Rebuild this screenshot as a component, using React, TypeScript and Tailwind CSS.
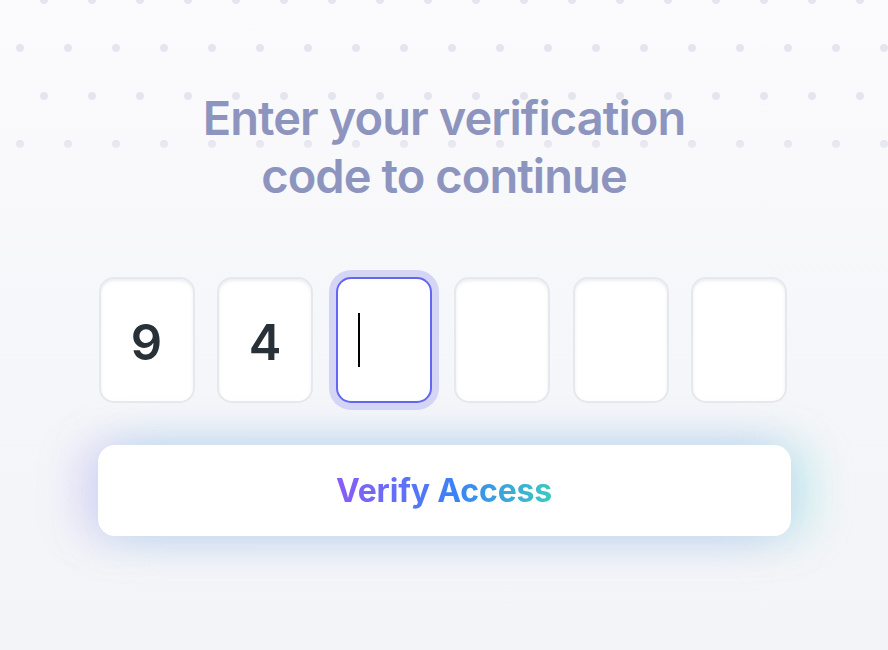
import React from "react";

export default function App() {
  const digits = ["9", "4", "", "", "", ""];
  return (
    <div className="relative h-[650px] w-full overflow-hidden bg-[linear-gradient(180deg,#fbfbfd_0%,#f5f6f9_60%,#f3f4f7_100%)] font-['Inter',sans-serif]">
      <div className="pointer-events-none absolute inset-x-0 top-0 h-[175px] bg-[radial-gradient(circle,#e4e5ee_3.6px,transparent_4.4px),radial-gradient(circle,#e4e5ee_3.6px,transparent_4.4px)] bg-[length:48px_96px] bg-[position:20px_-48px,-4px_0px] [mask-image:linear-gradient(180deg,#000_0%,#000_80%,transparent_100%)]" />
      <div className="relative flex flex-col items-center pt-[89px]">
        <h1 className="text-center text-[47px] font-semibold leading-[58px] tracking-[-0.02em] text-[#8d95bf]">
          Enter your verification
          <br />
          code to continue
        </h1>
        <div className="ml-[-2px] mt-[72px] flex gap-[22.6px]">
          {digits.map((d, i) =>
            i === 2 ? (
              <div
                key={i}
                className="flex h-[126px] w-[96px] items-center rounded-[15px] border-2 border-[#6366f1] bg-white pl-[20px] ring-[7px] ring-[#d5d6f6]"
              >
                <div className="h-[54px] w-[2px] bg-black" />
              </div>
            ) : (
              <div
                key={i}
                className="flex h-[126px] w-[96px] items-center justify-center rounded-[15px] border-2 border-[#e7e8ed] bg-white pt-[6px] text-[49px] font-semibold text-[#283038] shadow-[inset_0_2px_3px_rgba(200,203,215,0.35)]"
              >
                {d}
              </div>
            )
          )}
        </div>
        <button className="mt-[42px] flex h-[91px] w-[693px] items-center justify-center rounded-[17px] bg-white shadow-[0_0_40px_rgba(180,200,236,0.55),-24px_0_40px_rgba(167,139,250,0.18),24px_0_40px_rgba(94,234,212,0.22)]">
          <span className="bg-[linear-gradient(90deg,#8b5cf6_0%,#3b82f6_55%,#3cc8c0_100%)] bg-clip-text text-[32px] font-bold tracking-[-0.005em] text-transparent">
            Verify Access
          </span>
        </button>
      </div>
    </div>
  );
}
